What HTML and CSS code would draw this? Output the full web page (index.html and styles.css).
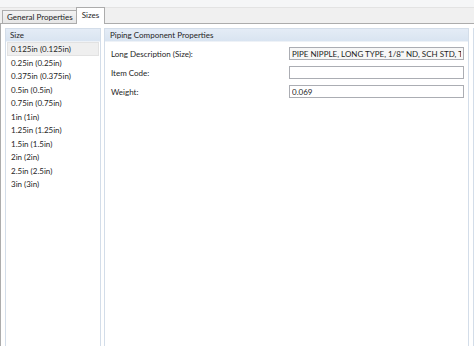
FILE: index.html
```html
<!DOCTYPE html>
<html lang="en">
<head>
  <meta charset="UTF-8" />
  <title>Sizes</title>
  <link rel="stylesheet" href="styles.css">
</head>
<body>
  <div class="topbar"></div>

  <div class="tabs">
    <div class="tab">General Properties</div>
    <div class="tab active">Sizes</div>
  </div>

  <div class="tabpage">
    <div class="panel sizes">
      <div class="panel-head">Size</div>
      <ul class="size-list">
        <li class="selected">0.125in (0.125in)</li>
        <li>0.25in (0.25in)</li>
        <li>0.375in (0.375in)</li>
        <li>0.5in (0.5in)</li>
        <li>0.75in (0.75in)</li>
        <li>1in (1in)</li>
        <li>1.25in (1.25in)</li>
        <li>1.5in (1.5in)</li>
        <li>2in (2in)</li>
        <li>2.5in (2.5in)</li>
        <li>3in (3in)</li>
      </ul>
    </div>

    <div class="panel props">
      <div class="panel-head">Piping Component Properties</div>
      <div class="prop-row">
        <label>Long Description (Size):</label>
        <input class="readonly" type="text" value="PIPE NIPPLE, LONG TYPE, 1/8&quot; ND, SCH STD, TEXT" />
      </div>
      <div class="prop-row">
        <label>Item Code:</label>
        <input type="text" value="" />
      </div>
      <div class="prop-row">
        <label>Weight:</label>
        <input type="text" value="0.069" />
      </div>
    </div>

    <div class="panel extra"></div>
  </div>
</body>
</html>
```

FILE: styles.css
```css
:root {
  --tab-border: #acacac;
  --panel-border: #d3dde9;
  --panel-head: #dfe8f3;
  --text: #1e1e1e;
}

* {
  box-sizing: border-box;
  margin: 0;
  padding: 0;
}

html, body {
  width: 100%;
  height: 100%;
  overflow: hidden;
}

body {
  font-family: Lato, 'Open Sans', sans-serif;
  font-size: 8px;
  color: var(--text);
  background: #ffffff;
  display: flex;
  flex-direction: column;
}

.topbar {
  height: 8px;
  background: #f5f6f7;
  border-bottom: 1px solid #e3e3e3;
}

.tabs {
  height: 16px;
  display: flex;
  align-items: flex-end;
  padding-left: 2px;
  background: #f0f0f0;
  border-bottom: 1px solid var(--tab-border);
}

.tab {
  height: 13px;
  line-height: 12px;
  padding: 0 3px 0 4px;
  border: 1px solid var(--tab-border);
  border-bottom: none;
  background: linear-gradient(#f3f3f3, #e6e6e6);
  white-space: nowrap;
}

.tab.active {
  height: 17px;
  line-height: 15px;
  margin-left: -1px;
  margin-bottom: -1px;
  padding: 0 5px;
  background: #ffffff;
}

.tabpage {
  flex: 1;
  display: flex;
  gap: 3px;
  padding: 4px 0 0 4px;
  border-left: 1px solid var(--tab-border);
  min-height: 0;
}

.panel {
  border: 1px solid var(--panel-border);
  border-bottom: none;
  background: #ffffff;
}

.panel-head {
  height: 13px;
  line-height: 12px;
  padding-left: 4px;
  background: linear-gradient(#e4ecf6, #d9e4f1);
  border-bottom: 1px solid #eef2f7;
}

.sizes {
  width: 97px;
}

.size-list {
  list-style: none;
  padding: 0 1px;
}

.size-list li {
  height: 13.5px;
  line-height: 12px;
  padding-left: 3px;
  white-space: nowrap;
  border: 1px solid transparent;
}

.size-list li.selected {
  background: #efefef;
  border-color: #e2e2e2;
}

.props {
  width: 366px;
}

.props .panel-head {
  padding-left: 5px;
}

.prop-row {
  display: flex;
  align-items: center;
  height: 19px;
  padding: 0 4px 0 6px;
}

.props .panel-head + .prop-row {
  margin-top: 2px;
}

.prop-row label {
  width: 178px;
  white-space: nowrap;
}

.prop-row input {
  width: 175px;
  height: 13px;
  font-family: inherit;
  font-size: 8px;
  color: var(--text);
  padding: 0 2px;
  border: 1px solid #abadb3;
  background: #ffffff;
  outline: none;
}

.prop-row input.readonly {
  background: #f7f7f7;
}

.extra {
  flex: 1;
  margin-left: 1px;
  border-right: none;
  background: linear-gradient(#dfe8f3 13px, #f3f6fa 13px);
}
```
